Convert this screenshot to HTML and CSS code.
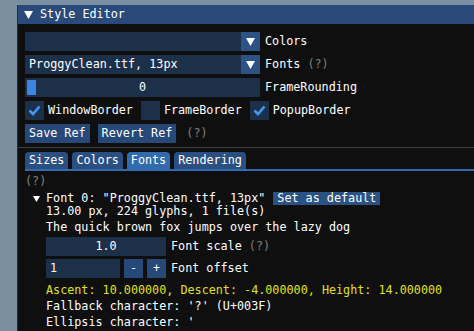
FILE: index.html
```html
<!DOCTYPE html>
<html lang="en">
<head>
    <meta charset="UTF-8">
    <title>Style Editor</title>
    <link rel="stylesheet" href="styles.css">
</head>
<body>
    <div class="window">
        <!-- Title bar -->
        <div class="titlebar">
            <svg class="title-arrow" width="9" height="8" viewBox="0 0 9 8"><path d="M0 0 H9 L4.5 8 Z" fill="#fff"/></svg>
            <span>Style Editor</span>
        </div>

        <div class="content">
            <div class="row">
                <div class="combo">
                    <span class="combo-text"></span>
                    <span class="combo-btn"><svg width="9" height="8" viewBox="0 0 9 8"><path d="M0 0 H9 L4.5 8 Z" fill="#fff"/></svg></span>
                </div>
                <span class="label">Colors</span>
            </div>
            <div class="row">
                <div class="combo">
                    <span class="combo-text">ProggyClean.ttf, 13px</span>
                    <span class="combo-btn"><svg width="9" height="8" viewBox="0 0 9 8"><path d="M0 0 H9 L4.5 8 Z" fill="#fff"/></svg></span>
                </div>
                <span class="label">Fonts <span class="muted">(?)</span></span>
            </div>
            <div class="row">
                <div class="slider">
                    <span class="grab"></span>
                    <span class="slider-val">0</span>
                </div>
                <span class="label">FrameRounding</span>
            </div>
            <div class="row checks">
                <label class="check">
                    <span class="box"><svg width="19" height="19" viewBox="0 0 19 19"><path d="M4.5 9.5 L8 13 L14.5 5.5" fill="none" stroke="#4296fa" stroke-width="2.6"/></svg></span>
                    WindowBorder
                </label>
                <label class="check">
                    <span class="box"></span>
                    FrameBorder
                </label>
                <label class="check">
                    <span class="box"><svg width="19" height="19" viewBox="0 0 19 19"><path d="M4.5 9.5 L8 13 L14.5 5.5" fill="none" stroke="#4296fa" stroke-width="2.6"/></svg></span>
                    PopupBorder
                </label>
            </div>
            <div class="row btns">
                <button class="btn">Save Ref</button>
                <button class="btn">Revert Ref</button>
                <span class="muted help">(?)</span>
            </div>

            <div class="sep"></div>

            <div class="tabbar">
                <span class="tab">Sizes</span>
                <span class="tab">Colors</span>
                <span class="tab active">Fonts</span>
                <span class="tab">Rendering</span>
            </div>

            <div class="text muted">(?)</div>

            <div class="tree">
                <div class="tree-head">
                    <svg class="tree-arrow" width="7" height="6" viewBox="0 0 7 6"><path d="M0 0 H7 L3.5 6 Z" fill="#fff"/></svg>
                    <span>Font 0: "ProggyClean.ttf, 13px"</span>
                    <span class="small-btn">Set as default</span>
                </div>
                <div class="tree-body">
                    <div class="text">13.00 px, 224 glyphs, 1 file(s)</div>
                    <div class="text">The quick brown fox jumps over the lazy dog</div>
                    <div class="row">
                        <div class="input wide">1.0</div>
                        <span class="label">Font scale <span class="muted">(?)</span></span>
                    </div>
                    <div class="row">
                        <div class="input narrow">1</div>
                        <div class="step">
                            <span class="step-btn">-</span>
                            <span class="step-btn">+</span>
                        </div>
                        <span class="label">Font offset</span>
                    </div>
                    <div class="text yellow">Ascent: 10.000000, Descent: -4.000000, Height: 14.000000</div>
                    <div class="text">Fallback character: '?' (U+003F)</div>
                    <div class="text">Ellipsis character: '</div>
                </div>
            </div>
        </div>
    </div>
</body>
</html>
```

FILE: styles.css
```css
* {
    box-sizing: border-box;
    margin: 0;
    padding: 0;
}
html, body {
    height: 100%;
    overflow: hidden;
}
body {
    background-color: #7b8fa0;
    font-family: 'DejaVu Sans Mono', 'Liberation Mono', monospace;
    font-size: 11.75px;
    line-height: 13px;
    color: #fff;
    padding: 5px 0 0 17px;
}
.window {
    width: 457px;
    height: 326px;
    overflow: hidden;
    background-color: #0f0f0f;
    border-left: 1px solid #2a2a30;
}
.titlebar {
    height: 19px;
    background-color: #294a7a;
    display: flex;
    align-items: center;
    gap: 7px;
    padding-left: 6px;
}
.content {
    display: flex;
    flex-direction: column;
    gap: 4px;
    padding: 8px 0 0 7px;
}
.row {
    display: flex;
    align-items: center;
    gap: 5px;
    height: 19px;
}
.combo {
    width: 235px;
    height: 19px;
    display: flex;
    background-color: #1d304a;
}
.combo-text {
    flex: 1;
    padding: 3px 4px;
}
.combo-btn {
    width: 19px;
    height: 19px;
    background-color: #2d5385;
    display: flex;
    align-items: center;
    justify-content: center;
}
.label {
    white-space: nowrap;
}
.muted {
    color: #808080;
}
.slider {
    width: 235px;
    height: 19px;
    background-color: #1d304a;
    display: flex;
    align-items: center;
    justify-content: center;
    position: relative;
}
.grab {
    position: absolute;
    left: 2px;
    top: 2px;
    width: 9px;
    height: 15px;
    background-color: #3d85e0;
}
.checks {
    gap: 8px;
}
.check {
    display: flex;
    align-items: center;
    gap: 4px;
}
.box {
    width: 19px;
    height: 19px;
    background-color: #1d304a;
    display: block;
}
.box svg {
    display: block;
}
.btns {
    gap: 8px;
}
.btn {
    height: 19px;
    padding: 0 4px;
    border: none;
    background-color: #26497a;
    color: #fff;
    font: inherit;
}
.help {
    margin-left: 2px;
}
.sep {
    height: 1px;
    margin-left: -7px;
    background-color: #3e3e47;
}
.tabbar {
    display: flex;
    gap: 4px;
    height: 19px;
    border-bottom: 2px solid #3369ad;
}
.tab {
    height: 17px;
    padding: 2px 4px 0;
    background-color: #2a4f82;
    border-radius: 4px 4px 0 0;
}
.tab.active {
    background-color: #3369ad;
}
.text {
    height: 13px;
    white-space: nowrap;
}
.tree {
    display: flex;
    flex-direction: column;
}
.tree-head {
    display: flex;
    align-items: center;
    height: 13px;
    white-space: nowrap;
}
.tree-arrow {
    margin: 0 6px 0 8px;
}
.small-btn {
    margin-left: 8px;
    padding: 0 4px;
    background-color: #2a5283;
}
.tree-body {
    display: flex;
    flex-direction: column;
    gap: 3px;
    padding-left: 21px;
}
.tree-body .row {
    gap: 5px;
}
.input {
    height: 19px;
    background-color: #1d304a;
    padding: 3px 4px;
}
.input.wide {
    width: 120px;
    text-align: center;
}
.input.narrow {
    width: 74px;
}
.step {
    display: flex;
    gap: 4px;
    margin-left: -1px;
}
.step-btn {
    width: 19px;
    height: 19px;
    background-color: #26497a;
    text-align: center;
    padding-top: 3px;
}
.yellow {
    color: #e0e020;
    margin-top: 3px;
}
```
